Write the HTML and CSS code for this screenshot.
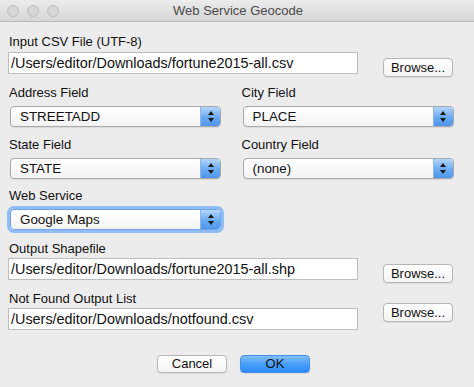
FILE: index.html
```html
<!DOCTYPE html>
<html>
<head>
<meta charset="utf-8">
<link rel="stylesheet" href="styles.css">
</head>
<body>
<div class="window">
  <div class="titlebar">
    <div class="lights"><span class="light"></span><span class="light"></span><span class="light"></span></div>
    <div class="title">Web Service Geocode</div>
  </div>
  <div class="content">
    <div class="group g-input">
      <div class="label">Input CSV File (UTF-8)</div>
      <div class="file-row">
        <div class="field">/Users/editor/Downloads/fortune2015-all.csv</div>
        <button class="btn browse b-low">Browse...</button>
      </div>
    </div>

    <div class="pair g-addr">
      <div class="col">
        <div class="label">Address Field</div>
        <div class="select"><span class="val">STREETADD</span><span class="stepper"><i class="up"></i><i class="down"></i></span></div>
      </div>
      <div class="col">
        <div class="label">City Field</div>
        <div class="select"><span class="val">PLACE</span><span class="stepper"><i class="up"></i><i class="down"></i></span></div>
      </div>
    </div>

    <div class="pair g-state">
      <div class="col">
        <div class="label">State Field</div>
        <div class="select"><span class="val">STATE</span><span class="stepper"><i class="up"></i><i class="down"></i></span></div>
      </div>
      <div class="col">
        <div class="label">Country Field</div>
        <div class="select"><span class="val">(none)</span><span class="stepper"><i class="up"></i><i class="down"></i></span></div>
      </div>
    </div>

    <div class="pair g-web">
      <div class="col">
        <div class="label">Web Service</div>
        <div class="select focused"><span class="val">Google Maps</span><span class="stepper"><i class="up"></i><i class="down"></i></span></div>
      </div>
    </div>

    <div class="group g-out">
      <div class="label">Output Shapefile</div>
      <div class="file-row">
        <div class="field">/Users/editor/Downloads/fortune2015-all.shp</div>
        <button class="btn browse b-low">Browse...</button>
      </div>
    </div>

    <div class="group g-nf">
      <div class="label">Not Found Output List</div>
      <div class="file-row">
        <div class="field">/Users/editor/Downloads/notfound.csv</div>
        <button class="btn browse b-high">Browse...</button>
      </div>
    </div>

    <div class="actions">
      <button class="btn cancel">Cancel</button>
      <button class="btn ok">OK</button>
    </div>
  </div>
</div>
</body>
</html>
```

FILE: styles.css
```css
html, body {
  margin: 0;
  padding: 0;
  background: #ececec;
}
body {
  font-family: "Liberation Sans", Arial, sans-serif;
  font-size: 13px;
  color: #111;
}
.window {
  width: 474px;
  height: 387px;
  background: #ececec;
  overflow: hidden;
}
.titlebar {
  position: relative;
  height: 21px;
  border-bottom: 1px solid #b9b9b9;
  background: linear-gradient(#ececec, #d6d6d6);
  display: flex;
  align-items: center;
  justify-content: center;
}
.lights {
  position: absolute;
  left: 7px;
  top: 5px;
  display: flex;
  gap: 8px;
}
.light {
  width: 12px;
  height: 12px;
  border-radius: 50%;
  background: #d6d6d6;
  border: 1px solid #bdbdbd;
  box-sizing: border-box;
}
.title {
  font-size: 13px;
  color: #4a4a4a;
  margin-left: 2px;
}
.content {
  padding-left: 9px;
}
.label {
  line-height: 16px;
  height: 16px;
  white-space: nowrap;
}
.g-input { margin-top: 12px; }
.g-input .label { margin-bottom: 2px; }
.file-row {
  display: flex;
  align-items: flex-start;
}
.field {
  margin-left: -1px;
  width: 350px;
  height: 22px;
  box-sizing: border-box;
  background: #fff;
  border: 1px solid #bdbdbd;
  line-height: 20px;
  padding-left: 2px;
  font-size: 14.4px;
  white-space: nowrap;
  overflow: hidden;
}
.btn {
  font-family: "Liberation Sans", Arial, sans-serif;
  font-size: 13px;
  color: #111;
  height: 19px;
  width: 70px;
  padding: 0;
  box-sizing: border-box;
  border-radius: 4px;
  border: 1px solid #b6b6b6;
  background: linear-gradient(#ffffff, #f4f4f4);
  box-shadow: 0 1px 1px rgba(0,0,0,0.08);
  line-height: 16px;
}
.browse { margin-left: 25px; }
.b-low { margin-top: 6px; }
.b-high { margin-top: -5px; }

.pair {
  display: flex;
}
.col {
  width: 238px;
}
.col .label { margin-bottom: 5px; }
.g-addr { margin-top: 8px; }
.g-state { margin-top: 10px; }
.g-web { margin-top: 9px; }

.select {
  margin-left: 1px;
  width: 211px;
  height: 21px;
  box-sizing: border-box;
  border: 1px solid #a9a9a9;
  border-radius: 4px;
  background: linear-gradient(#ffffff, #f3f3f3);
  display: flex;
  align-items: stretch;
  box-shadow: 0 1px 1px rgba(0,0,0,0.08);
}
.select .val {
  flex: 1;
  padding-left: 9px;
  line-height: 19px;
  font-size: 13.4px;
}
.stepper {
  width: 19px;
  border-left: 1px solid #8bb6e8;
  border-radius: 0 3px 3px 0;
  background: linear-gradient(#b3d6fa, #6aaaf3 55%, #4f95ec);
  display: flex;
  flex-direction: column;
  align-items: center;
  justify-content: center;
  gap: 3px;
}
.stepper i {
  width: 0;
  height: 0;
  border-left: 3px solid transparent;
  border-right: 3px solid transparent;
}
.stepper .up { border-bottom: 4px solid #1a1a1a; }
.stepper .down { border-top: 4px solid #1a1a1a; }
.select.focused {
  box-shadow: 0 0 0 3px #8fbcf2;
  border-color: #6fa3e6;
}

.g-out { margin-top: 11px; }
.g-out .label { margin-bottom: 1px; }
.g-nf { margin-top: 8px; }
.g-nf .label { margin-bottom: 1px; }

.actions {
  display: flex;
  gap: 13px;
  margin-top: 25px;
  margin-left: 148px;
}
.cancel { width: 70px; height: 18px; }
.ok {
  width: 70px;
  height: 18px;
  border: 1px solid #3f8ee8;
  background: linear-gradient(#82bffb, #4a9ef9 50%, #2a8bfa);
}
```
